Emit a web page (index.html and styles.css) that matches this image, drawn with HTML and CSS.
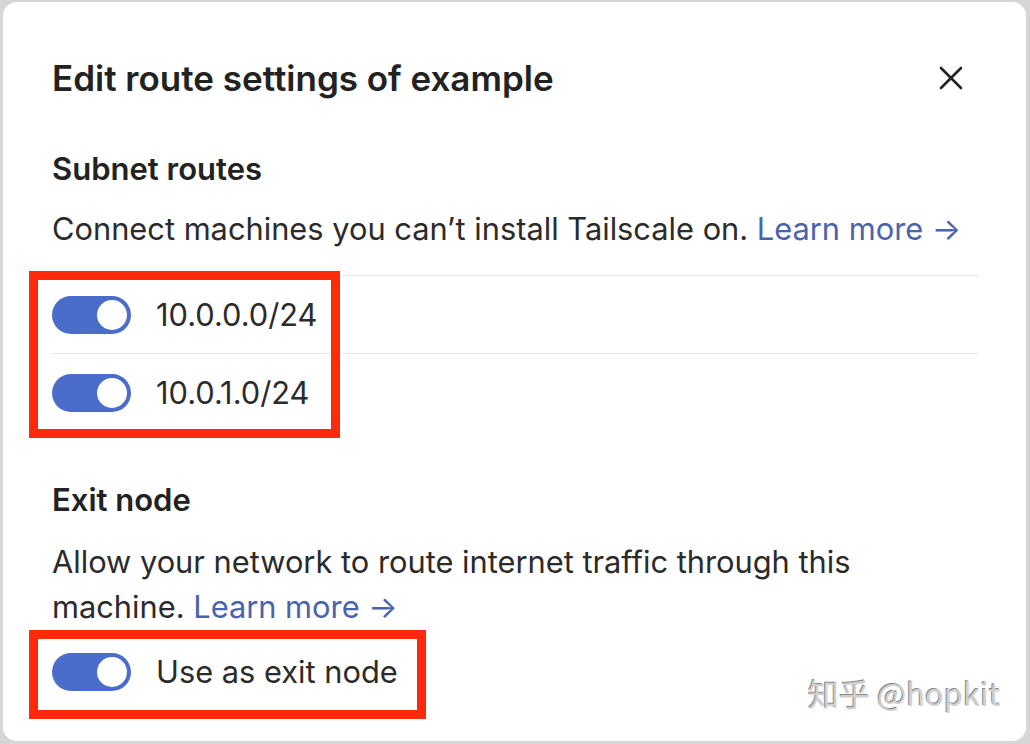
FILE: index.html
```html
<!DOCTYPE html>
<html lang="en">
<head>
<meta charset="utf-8">
<title>Edit route settings</title>
<link rel="stylesheet" href="styles.css">
</head>
<body>
<div class="modal">
  <header class="modal-header">
    <h1 class="title">Edit route settings of example</h1>
    <button class="close" aria-label="Close">
      <svg width="24" height="24" viewBox="0 0 24 24" fill="none" stroke="#222" stroke-width="2.6" stroke-linecap="round"><path d="M2 2L22 22M22 2L2 22"/></svg>
    </button>
  </header>

  <section class="section">
    <h2 class="heading">Subnet routes</h2>
    <p class="desc">Connect machines you can’t install Tailscale on. <a class="link" href="#">Learn more →</a></p>
    <div class="rows bordered">
      <div class="row"><span class="toggle"><span class="knob"></span></span><span class="label">10.0.0.0/24</span></div>
      <div class="row row-last"><span class="toggle"><span class="knob"></span></span><span class="label">10.0.1.0/24</span></div>
      <div class="mark mark-1"></div>
    </div>
  </section>

  <section class="section">
    <h2 class="heading">Exit node</h2>
    <p class="desc desc-exit">Allow your network to route internet traffic through this machine. <a class="link" href="#">Learn more →</a></p>
    <div class="rows exit-rows">
      <div class="row row-last"><span class="toggle"><span class="knob"></span></span><span class="label">Use as exit node</span></div>
      <div class="mark mark-2"></div>
    </div>
  </section>

  <div class="watermark">知乎 @hopkit</div>
</div>
</body>
</html>
```

FILE: styles.css
```css
* { box-sizing: border-box; }
html, body { margin: 0; padding: 0; }
body {
  background: #d6d6d6;
  width: 1030px;
  height: 744px;
  padding: 2px 4px 3px 3px;
  font-family: Inter, "Noto Sans", "Liberation Sans", sans-serif;
  color: #2b2b2b;
  overflow: hidden;
}
.modal {
  position: relative;
  background: #fff;
  border-radius: 14px;
  width: 1023px;
  height: 739px;
  padding: 54px 48px 0 49px;
}
.modal-header {
  display: flex;
  align-items: center;
  justify-content: space-between;
}
.title {
  margin: 0;
  font-size: 35px;
  line-height: 44px;
  font-weight: 600;
  color: #222;
}
.close {
  border: 0;
  background: none;
  padding: 0;
  margin-right: 15px;
  width: 24px;
  height: 24px;
  display: flex;
}
.section { margin-top: 49px; }
.heading {
  margin: 0;
  font-size: 31px;
  line-height: 40px;
  font-weight: 600;
  color: #222;
}
.desc {
  margin: 18px 0 0;
  font-size: 30.8px;
  line-height: 44px;
  color: #2b2b2b;
}
.desc-exit { margin-top: 19px; line-height: 45px; }
.link { color: #4a63ae; text-decoration: none; }
.rows { position: relative; }
.bordered { margin-top: 24px; border-top: 1px solid #e6e6e6; }
.row {
  display: flex;
  align-items: center;
  gap: 25px;
  height: 78px;
  border-bottom: 1px solid #e6e6e6;
}
.row-last { border-bottom: 0; height: 77px; }
.toggle {
  width: 79px;
  height: 38px;
  border-radius: 19px;
  background: #4a6ccb;
  display: flex;
  align-items: center;
  justify-content: flex-end;
  padding-right: 4px;
}
.knob {
  width: 30px;
  height: 30px;
  border-radius: 50%;
  background: #fff;
}
.label {
  font-size: 30.8px;
  line-height: 40px;
  color: #2b2b2b;
}
.exit-rows { margin-top: 4px; }
.mark {
  position: absolute;
  border: 9px solid #ff2a0a;
  pointer-events: none;
}
.mark-1 { left: -23px; top: -5px; width: 311px; height: 167px; }
.mark-2 { left: -23px; top: -3px; width: 397px; height: 89px; }
.watermark {
  position: absolute;
  left: 805px;
  top: 671px;
  font-family: "Noto Sans CJK SC", "Noto Sans", sans-serif;
  font-size: 31px;
  line-height: 40px;
  color: #d0d0d0;
  text-shadow: -1px -1px 0 #8a8a8a, 1px 1px 0 #fff;
}
```
